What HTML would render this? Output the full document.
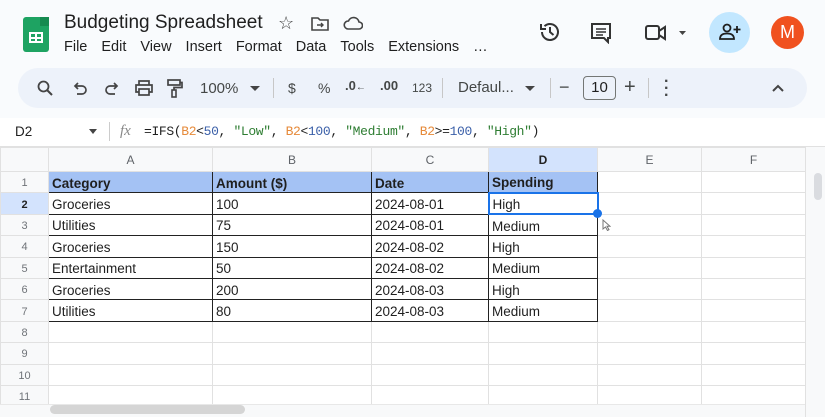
<!DOCTYPE html>
<html><head><style>
*{margin:0;padding:0;box-sizing:border-box}
body{width:825px;height:417px;overflow:hidden;background:#f9fbfd;font-family:"Liberation Sans",Arial,sans-serif;position:relative;color:#1f1f1f}
.a{position:absolute}
.menu span{margin-right:14px}
.tb{color:#444746;font-size:15px}
svg{position:absolute}
table{border-collapse:collapse;position:absolute;left:0;top:147px;table-layout:fixed;background:#fff}
td{border:1px solid #e1e1e1;height:21.4px;font-size:13.5px;padding:2px 3px 0;white-space:nowrap;overflow:hidden}
tr.h td{height:24px;text-align:center;color:#5f6368;font-size:12px;background:#f8f9fa;padding:0}
td.r{text-align:center;color:#6f7378;font-size:11px;background:#f8f9fa}
.d td.b{border:1px solid #222}
</style></head><body>
<!-- logo -->
<div class="a" style="left:23px;top:17px;width:26px;height:35px;background:#1ea362;border-radius:3px"></div>
<div class="a" style="left:40px;top:17px;width:9px;height:9px;background:#168a50"></div>
<div class="a" style="left:29px;top:32px;width:14px;height:11px;border:2px solid #fff;background:linear-gradient(#fff,#fff) center/100% 2px no-repeat,linear-gradient(#fff,#fff) center/2px 100% no-repeat"></div>
<div class="a" style="left:64px;top:12px;font-size:19px;color:#1f1f1f">Budgeting Spreadsheet</div>
<div class="a" style="left:278px;top:13px;font-size:18px;color:#444">☆</div>
<svg style="left:311px;top:16px" width="18" height="16" viewBox="0 0 18 16"><path d="M1 2h6l2 2h8v10H1z" fill="none" stroke="#444" stroke-width="1.6"/><path d="M6 9h6M10 7l2 2-2 2" stroke="#444" stroke-width="1.4" fill="none"/></svg>
<svg style="left:343px;top:16px" width="20" height="15" viewBox="0 0 20 15"><path d="M5 13h11a3.5 3.5 0 0 0 0-7 5.5 5.5 0 0 0-10.5-1A4 4 0 0 0 5 13z" fill="none" stroke="#444" stroke-width="1.6"/></svg>
<div class="a menu" style="left:64px;top:39px;font-size:14.5px;color:#1f1f1f"><span>File</span><span>Edit</span><span>View</span><span>Insert</span><span>Format</span><span>Data</span><span>Tools</span><span>Extensions</span><span>…</span></div>
<!-- right icons -->
<svg style="left:539px;top:21px" width="22" height="22" viewBox="0 0 22 22"><path d="M3 11a8 8 0 1 0 2.5-5.8" fill="none" stroke="#333" stroke-width="2"/><path d="M2 3v5h5" fill="none" stroke="#333" stroke-width="2"/><path d="M11 6v5l3.5 3" fill="none" stroke="#333" stroke-width="2"/></svg>
<svg style="left:590px;top:22px" width="22" height="22" viewBox="0 0 22 22"><path d="M2 2h18v14h-2v4l-4-4H2z" fill="none" stroke="#333" stroke-width="2"/><path d="M6 7h10M6 10h10M6 13h7" stroke="#333" stroke-width="1.6"/></svg>
<svg style="left:645px;top:24px" width="44" height="18" viewBox="0 0 44 18"><rect x="1" y="2" width="13" height="13" rx="2" fill="none" stroke="#333" stroke-width="2"/><path d="M14 7l6-4v12l-6-4" fill="none" stroke="#333" stroke-width="2"/><path d="M34 7h7l-3.5 4z" fill="#444"/></svg>
<div class="a" style="left:709px;top:12px;width:41px;height:41px;border-radius:50%;background:#c2e7ff"></div>
<svg style="left:719px;top:23px" width="22" height="18" viewBox="0 0 22 18"><circle cx="8" cy="5" r="3.5" fill="none" stroke="#1f1f1f" stroke-width="1.8"/><path d="M1 16c0-4 3-5.5 7-5.5s7 1.5 7 5.5z" fill="none" stroke="#1f1f1f" stroke-width="1.8"/><path d="M18 3v7M14.5 6.5h7" stroke="#1f1f1f" stroke-width="1.8"/></svg>
<div class="a" style="left:771px;top:16px;width:33px;height:33px;border-radius:50%;background:#f0511f;color:#fff;font-size:18px;text-align:center;line-height:33px">M</div>
<!-- toolbar -->
<div class="a" style="left:18px;top:68px;width:789px;height:40px;border-radius:20px;background:#edf2fa"></div>
<svg style="left:37px;top:80px" width="16" height="16" viewBox="0 0 16 16"><circle cx="6.5" cy="6.5" r="5" fill="none" stroke="#444" stroke-width="1.8"/><path d="M10 10l5 5" stroke="#444" stroke-width="2"/></svg>
<svg style="left:72px;top:81px" width="16" height="16" viewBox="0 0 16 16"><path d="M4 5h6a4 4 0 0 1 0 8H5M6 2L3 5l3 3" fill="none" stroke="#444" stroke-width="1.7"/></svg>
<svg style="left:104px;top:81px" width="16" height="16" viewBox="0 0 16 16"><path d="M12 5H6a4 4 0 0 0 0 8h5M10 2l3 3-3 3" fill="none" stroke="#444" stroke-width="1.7"/></svg>
<svg style="left:135px;top:80px" width="18" height="17" viewBox="0 0 18 17"><path d="M4 5V1h10v4M4 12H1V5h16v7h-3" fill="none" stroke="#444" stroke-width="1.7"/><rect x="4" y="9" width="10" height="6" fill="none" stroke="#444" stroke-width="1.7"/></svg>
<svg style="left:167px;top:79px" width="16" height="19" viewBox="0 0 16 19"><rect x="1" y="1" width="12" height="5" fill="none" stroke="#444" stroke-width="1.7"/><path d="M13 3.5h2v5H7v3" fill="none" stroke="#444" stroke-width="1.7"/><rect x="5" y="11" width="4" height="7" fill="none" stroke="#444" stroke-width="1.6"/></svg>
<div class="a tb" style="left:200px;top:80px">100%</div>
<div class="a" style="left:250px;top:86px;border:5px solid transparent;border-top-color:#444"></div>
<div class="a" style="left:273px;top:78px;width:1px;height:20px;background:#c7c7c7"></div>
<div class="a tb" style="left:288px;top:80px;font-size:14px">$</div>
<div class="a tb" style="left:318px;top:80px;font-size:14px">%</div>
<div class="a tb" style="left:345px;top:78px;font-size:13px;font-weight:bold">.0<span style="font-size:10px">←</span></div>
<div class="a tb" style="left:380px;top:78px;font-size:13px;font-weight:bold">.00</div>
<div class="a tb" style="left:412px;top:81px;font-size:12px">123</div>
<div class="a" style="left:442px;top:78px;width:1px;height:20px;background:#c7c7c7"></div>
<div class="a tb" style="left:458px;top:79px">Defaul...</div>
<div class="a" style="left:525px;top:86px;border:5px solid transparent;border-top-color:#444"></div>
<div class="a" style="left:550px;top:78px;width:1px;height:20px;background:#c7c7c7"></div>
<div class="a tb" style="left:559px;top:77px;font-size:18px">−</div>
<div class="a" style="left:583px;top:76px;width:33px;height:24px;border:1px solid #747775;border-radius:4px;text-align:center;line-height:22px;font-size:15px;color:#1f1f1f">10</div>
<div class="a tb" style="left:624px;top:76px;font-size:20px">+</div>
<div class="a" style="left:648px;top:78px;width:1px;height:20px;background:#c7c7c7"></div>
<div class="a tb" style="left:664px;top:78px;font-size:16px;font-weight:bold;line-height:7px;width:4px">·<br>·<br>·</div>
<svg style="left:771px;top:84px" width="14" height="9" viewBox="0 0 14 9"><path d="M2 7l5-5 5 5" fill="none" stroke="#444" stroke-width="2"/></svg>
<!-- formula bar -->
<div class="a" style="left:0;top:118px;width:825px;height:29px;background:#fff;border-bottom:1px solid #e1e1e1"></div>
<div class="a" style="left:15px;top:124px;font-size:13.5px">D2</div>
<div class="a" style="left:89px;top:129px;border:4px solid transparent;border-top-color:#444;border-width:5px 4px"></div>
<div class="a" style="left:109px;top:122px;width:1px;height:19px;background:#ccc"></div>
<div class="a" style="left:120px;top:123px;font-family:'Liberation Serif',serif;font-style:italic;color:#888;font-size:15px">fx</div>
<div class="a" style="left:144px;top:124px;font-family:'Liberation Mono',monospace;font-size:13px;color:#1f1f1f;letter-spacing:-0.35px">=IFS(<span style="color:#e68a3a">B2</span>&lt;<span style="color:#3a5fa8">50</span>, <span style="color:#2e7d32">"Low"</span>, <span style="color:#e68a3a">B2</span>&lt;<span style="color:#3a5fa8">100</span>, <span style="color:#2e7d32">"Medium"</span>, <span style="color:#e68a3a">B2</span>&gt;=<span style="color:#3a5fa8">100</span>, <span style="color:#2e7d32">"High"</span>)</div>
<!-- grid -->
<table style="width:805px">
<colgroup><col style="width:48px"><col style="width:164px"><col style="width:159px"><col style="width:117px"><col style="width:109px"><col style="width:104px"><col style="width:104px"></colgroup>
<tr class="h"><td></td><td>A</td><td>B</td><td>C</td><td style="background:#d3e3fd;font-weight:bold;color:#222">D</td><td>E</td><td>F</td></tr>
<tr class="d"><td class="r">1</td><td class="b" style="background:#a4c2f4;font-weight:bold">Category</td><td class="b" style="background:#a4c2f4;font-weight:bold">Amount ($)</td><td class="b" style="background:#a4c2f4;font-weight:bold">Date</td><td class="b" style="background:#a4c2f4;font-weight:bold">Spending</td><td></td><td></td></tr>
<tr class="d"><td class="r" style="background:#d3e3fd;color:#222;font-weight:bold">2</td><td class="b">Groceries</td><td class="b">100</td><td class="b">2024-08-01</td><td class="b" style="border:2px solid #1a73e8">High</td><td></td><td></td></tr>
<tr class="d"><td class="r">3</td><td class="b">Utilities</td><td class="b">75</td><td class="b">2024-08-01</td><td class="b">Medium</td><td></td><td></td></tr>
<tr class="d"><td class="r">4</td><td class="b">Groceries</td><td class="b">150</td><td class="b">2024-08-02</td><td class="b">High</td><td></td><td></td></tr>
<tr class="d"><td class="r">5</td><td class="b">Entertainment</td><td class="b">50</td><td class="b">2024-08-02</td><td class="b">Medium</td><td></td><td></td></tr>
<tr class="d"><td class="r">6</td><td class="b">Groceries</td><td class="b">200</td><td class="b">2024-08-03</td><td class="b">High</td><td></td><td></td></tr>
<tr class="d"><td class="r">7</td><td class="b">Utilities</td><td class="b">80</td><td class="b">2024-08-03</td><td class="b">Medium</td><td></td><td></td></tr>
<tr><td class="r">8</td><td></td><td></td><td></td><td></td><td></td><td></td></tr>
<tr><td class="r">9</td><td></td><td></td><td></td><td></td><td></td><td></td></tr>
<tr><td class="r">10</td><td></td><td></td><td></td><td></td><td></td><td></td></tr>
<tr><td class="r">11</td><td></td><td></td><td></td><td></td><td></td><td></td></tr>
</table>
<div class="a" style="left:593px;top:209px;width:9px;height:9px;border-radius:50%;background:#1a73e8"></div>
<svg style="left:602px;top:219px" width="9" height="12" viewBox="0 0 9 12"><path d="M1 1v9l2.5-2 2 3.5 1.5-.8-2-3.4H8z" fill="#fff" stroke="#777" stroke-width="1"/></svg>
<!-- scrollbars -->
<div class="a" style="left:805px;top:147px;width:20px;height:270px;background:#f8f9fa;border-left:1px solid #e1e1e1"></div>
<div class="a" style="left:814px;top:173px;width:8px;height:27px;border-radius:4px;background:#dadce0"></div>
<div class="a" style="left:0;top:404px;width:805px;height:13px;background:#f8f9fa;border-top:1px solid #e8e8e8"></div>
<div class="a" style="left:50px;top:405px;width:195px;height:9px;border-radius:5px;background:#d5d5d5"></div>
</body></html>
